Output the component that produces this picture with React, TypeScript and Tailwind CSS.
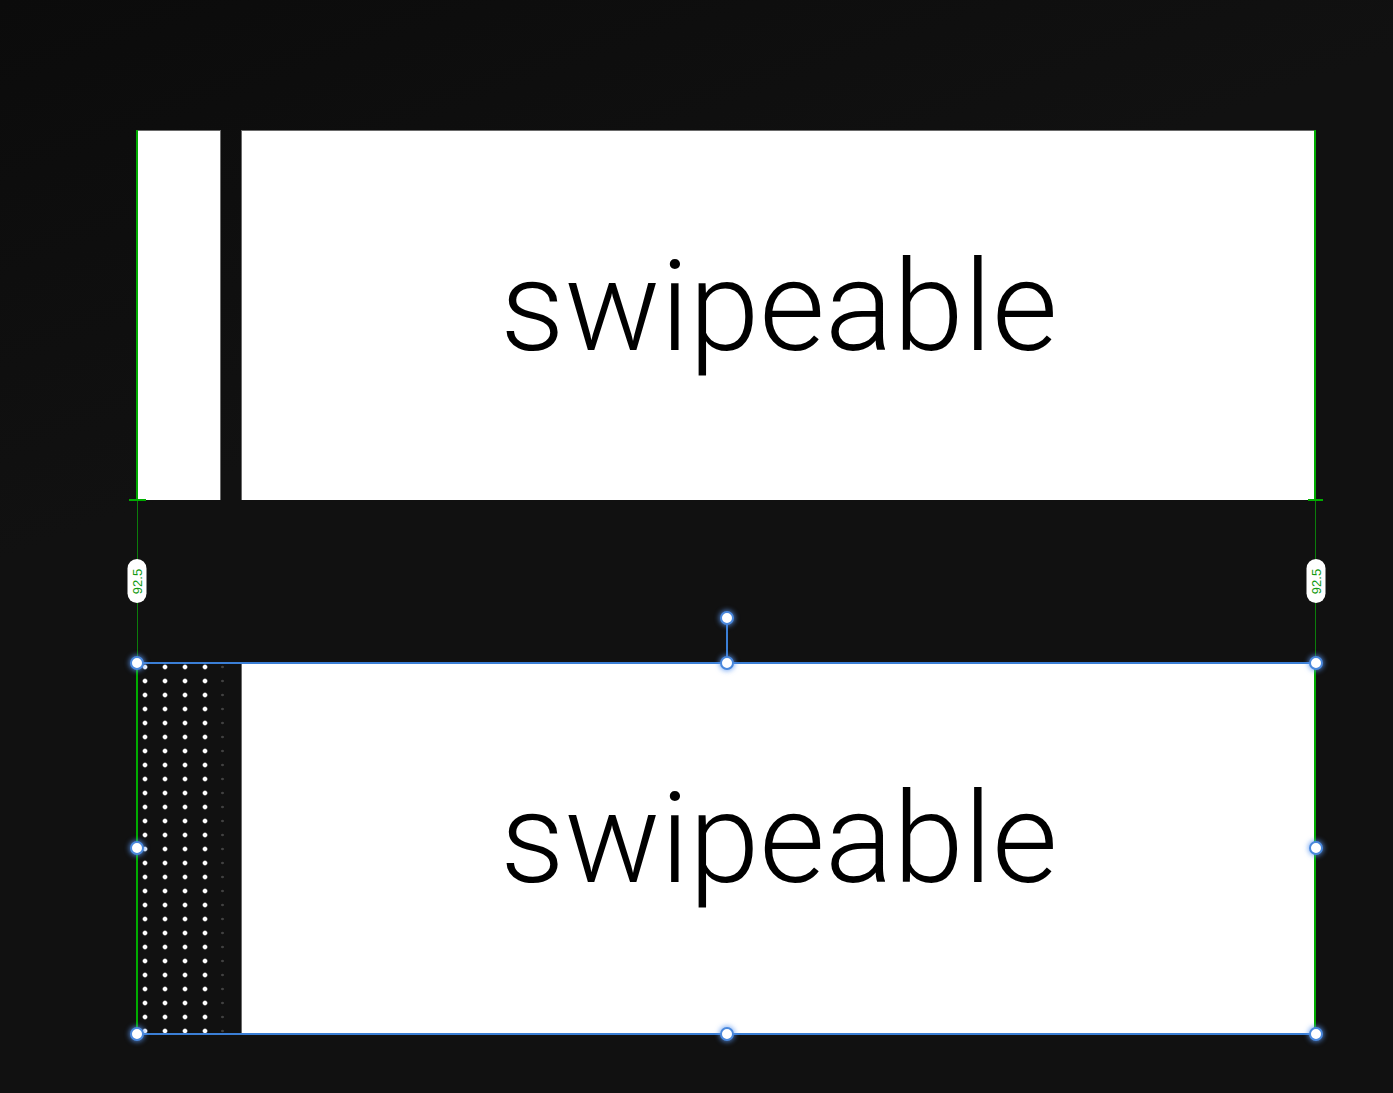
import React from "react";

const GREEN = "bg-[#00ad00]";

function Handle({ x, y }: { x: number; y: number }) {
  return (
    <div
      className="absolute w-[14px] h-[14px] rounded-full bg-white border-2 border-[#4a88dc] shadow-[0_0_5px_1px_rgba(90,150,240,0.75)] -translate-x-1/2 -translate-y-1/2"
      style={{ left: x, top: y }}
    />
  );
}

function Pill({ x }: { x: number }) {
  return (
    <div
      className="absolute top-[559px] w-[19px] h-[44px] rounded-full bg-white flex items-center justify-center -translate-x-1/2"
      style={{ left: x }}
    >
      <span className="-rotate-90 text-[13px] leading-none text-[#129a12] font-['Liberation_Sans',Arial,sans-serif] whitespace-nowrap">
        92.5
      </span>
    </div>
  );
}

function Guide({ x }: { x: number }) {
  return (
    <div className="absolute top-[130px] w-[2px] h-[903px] flex flex-col -translate-x-1/2" style={{ left: x }}>
      <div className={`h-[370px] w-[2px] ${GREEN}`} />
      <div className="h-[162px] w-px mx-auto bg-[#0b7d0b]" />
      <div className={`h-[371px] w-[2px] ${GREEN}`} />
    </div>
  );
}

export default function App() {
  return (
    <div className="relative w-[1393px] h-[1093px] overflow-hidden bg-[linear-gradient(160deg,#0b0b0b_0%,#111111_35%,#111111_100%)] font-['Roboto',sans-serif]">
      <div className="pl-[137px] pt-[130px] w-[1316px]">
        <div className="flex h-[370px] gap-[20px]">
          <div className="w-[84px] bg-white border-r border-t border-[#6a6a6a]" />
          <div className="flex-1 bg-white border-l border-t border-[#6a6a6a] flex items-center justify-center pb-[18px]">
            <span className="text-[127px] leading-none font-light text-black">swipeable</span>
          </div>
        </div>
        <div className="flex h-[371px] mt-[162px]">
          <div className="w-[104px] flex">
            <div className="w-[84px] h-full bg-[radial-gradient(circle,#ffffff_1.7px,rgba(255,255,255,0.4)_2.4px,transparent_3px)] bg-[length:20px_14px] bg-[position:-2px_-2px]" />
            <div className="w-[3px] h-full opacity-20 bg-[radial-gradient(circle,#ffffff_1px,transparent_1.6px)] bg-[length:3px_14px] bg-[position:0px_-2px]" />
          </div>
          <div className="flex-1 bg-white border-l border-[#6a6a6a] flex items-center justify-center pb-[18px]">
            <span className="text-[127px] leading-none font-light text-black">swipeable</span>
          </div>
        </div>
      </div>

      {/* green measurement guides */}
      <Guide x={137} />
      <Guide x={1315} />
      <div className={`absolute left-[129px] top-[499px] w-[17px] h-[2px] ${GREEN}`} />
      <div className={`absolute left-[1308px] top-[499px] w-[15px] h-[2px] ${GREEN}`} />

      <Pill x={137} />
      <Pill x={1316} />

      {/* selection outline */}
      <div className="absolute left-[137px] top-[662px] w-[1179px] h-[373px] border-y-2 border-[#3b7fd6]" />
      <div className="absolute left-[726px] top-[620px] w-[2px] h-[42px] bg-[#3b7fd6]" />

      <Handle x={727} y={618} />
      <Handle x={137} y={663} />
      <Handle x={727} y={663} />
      <Handle x={1316} y={663} />
      <Handle x={137} y={848} />
      <Handle x={1316} y={848} />
      <Handle x={137} y={1034} />
      <Handle x={727} y={1034} />
      <Handle x={1316} y={1034} />
    </div>
  );
}
